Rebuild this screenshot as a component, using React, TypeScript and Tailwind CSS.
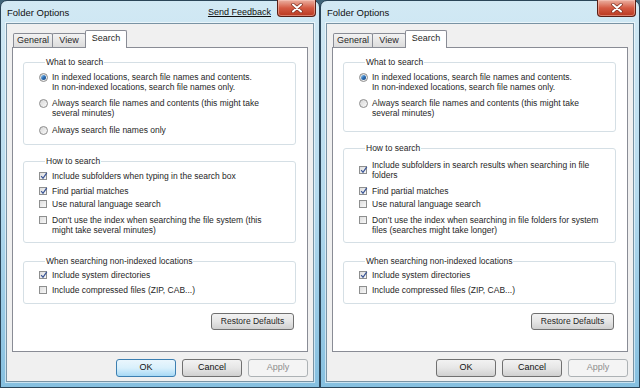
import React from 'react'

type Item = {
  kind: 'radio' | 'check'
  on?: boolean
  lines: string[]
  mt: string
  center?: boolean
}

type Group = {
  title: string
  mt: string
  pb: string
  items: Item[]
}

const leftGroups: Group[] = [
  {
    title: 'What to search',
    mt: 'mt-0',
    pb: 'pb-[9px]',
    items: [
      { kind: 'radio', on: true, mt: 'mt-[5px]', lines: ['In indexed locations, search file names and contents.', 'In non-indexed locations, search file names only.'] },
      { kind: 'radio', mt: 'mt-[6px]', lines: ['Always search file names and contents (this might take', 'several minutes)'] },
      { kind: 'radio', mt: 'mt-[7px]', lines: ['Always search file names only'] },
    ],
  },
  {
    title: 'How to search',
    mt: 'mt-[11px]',
    pb: 'pb-[7px]',
    items: [
      { kind: 'check', on: true, mt: 'mt-[5px]', lines: ['Include subfolders when typing in the search box'] },
      { kind: 'check', on: true, mt: 'mt-[5px]', lines: ['Find partial matches'] },
      { kind: 'check', mt: 'mt-[3px]', lines: ['Use natural language search'] },
      { kind: 'check', mt: 'mt-[6px]', lines: ["Don't use the index when searching the file system (this", 'might take several minutes)'] },
    ],
  },
  {
    title: 'When searching non-indexed locations',
    mt: 'mt-[13px]',
    pb: 'pb-[8px]',
    items: [
      { kind: 'check', on: true, mt: 'mt-[4px]', lines: ['Include system directories'] },
      { kind: 'check', mt: 'mt-[5px]', lines: ['Include compressed files (ZIP, CAB...)'] },
    ],
  },
]

const rightGroups: Group[] = [
  {
    title: 'What to search',
    mt: 'mt-0',
    pb: 'pb-[13px]',
    items: [
      { kind: 'radio', on: true, mt: 'mt-[5px]', lines: ['In indexed locations, search file names and contents.', 'In non-indexed locations, search file names only.'] },
      { kind: 'radio', mt: 'mt-[6px]', lines: ['Always search file names and contents (this might take', 'several minutes)'] },
    ],
  },
  {
    title: 'How to search',
    mt: 'mt-[11px]',
    pb: 'pb-[7px]',
    items: [
      { kind: 'check', on: true, center: true, mt: 'mt-[7px]', lines: ['Include subfolders in search results when searching in file', 'folders'] },
      { kind: 'check', on: true, mt: 'mt-[6px]', lines: ['Find partial matches'] },
      { kind: 'check', mt: 'mt-[3px]', lines: ['Use natural language search'] },
      { kind: 'check', mt: 'mt-[6px]', lines: ['Don\u2019t use the index when searching in file folders for system', 'files (searches might take longer)'] },
    ],
  },
  {
    title: 'When searching non-indexed locations',
    mt: 'mt-[13px]',
    pb: 'pb-[8px]',
    items: [
      { kind: 'check', on: true, mt: 'mt-[4px]', lines: ['Include system directories'] },
      { kind: 'check', mt: 'mt-[5px]', lines: ['Include compressed files (ZIP, CAB...)'] },
    ],
  },
]

function Radio({ on }: { on?: boolean }) {
  return (
    <span className="mt-[1px] flex h-[9px] w-[9px] shrink-0 items-center justify-center rounded-full border border-[#8c8c8c] bg-gradient-to-br from-[#d6d6d6] to-[#fbfbfb]">
      {on && <span className="h-[5px] w-[5px] rounded-full bg-gradient-to-br from-[#a6d6f5] via-[#2e72b8] to-[#17427a]" />}
    </span>
  )
}

function Check({ on, center }: { on?: boolean; center?: boolean }) {
  return (
    <span
      className={`${center ? '' : 'mt-[1px]'} relative flex h-[8px] w-[8px] shrink-0 items-center justify-center border border-[#8e8f8f] bg-gradient-to-br from-[#dedede] to-[#f8f8f8]`}
    >
      {on && (
        <svg width="8" height="8" viewBox="0 0 8 8" className="absolute left-[0px] top-[-1px]">
          <path d="M1.2 4.2 L3 6.3 L6.8 0.8" fill="none" stroke="#3b5696" strokeWidth="1.3" />
        </svg>
      )}
    </span>
  )
}

function Option({ item }: { item: Item }) {
  return (
    <div className={`flex ${item.center ? 'items-center' : 'items-start'} ${item.kind === 'radio' ? 'gap-[4px]' : 'gap-[5px]'} ${item.mt}`}>
      {item.kind === 'radio' ? <Radio on={item.on} /> : <Check on={item.on} center={item.center} />}
      <div className="whitespace-nowrap leading-[10px]">
        {item.lines.map((l) => (
          <div key={l}>{l}</div>
        ))}
      </div>
    </div>
  )
}

function GroupBox({ group }: { group: Group }) {
  return (
    <fieldset className={`rounded-[3px] border border-[#d5dfe5] pl-[15px] ${group.mt} ${group.pb}`}>
      <legend className="ml-[6px] px-[1px] leading-[10px]">{group.title}</legend>
      {group.items.map((it) => (
        <Option key={it.lines[0]} item={it} />
      ))}
    </fieldset>
  )
}

function Button({ label, variant }: { label: string; variant?: 'focus' | 'disabled' }) {
  const look =
    variant === 'focus'
      ? 'border-[#3c7fb1] bg-gradient-to-b from-[#eaf6fd] via-[#d9f0fc] to-[#a7d9f5] text-[#111]'
      : variant === 'disabled'
        ? 'border-[#adb2b5] bg-[#f4f4f4] text-[#8d8d8d]'
        : 'border-[#707070] bg-gradient-to-b from-[#f2f2f2] via-[#e6e6e6] to-[#d0d0d0] text-[#111]'
  return (
    <div className={`flex h-[18px] w-[60px] items-center justify-center rounded-[3px] border text-[9px] ${look}`}>{label}</div>
  )
}

function Tab({ label, selected, w }: { label: string; selected?: boolean; w: string }) {
  if (selected) {
    return (
      <div className={`relative z-10 -mb-px -ml-px flex h-[18px] ${w} items-center justify-center rounded-t-[2px] border border-b-0 border-[#898c95] bg-white pb-[2px] text-[9px]`}>
        {label}
      </div>
    )
  }
  return (
    <div className={`-ml-px flex h-[14px] ${w} items-center justify-center rounded-t-[2px] border border-b-0 border-[#898c95] bg-gradient-to-b from-[#f3f3f3] to-[#dcdcdc] pt-[1px] text-[9px] first:ml-0`}>
      {label}
    </div>
  )
}

function CloseIcon() {
  return (
    <svg width="12" height="10" viewBox="0 0 12 10">
      <path d="M2 1.5 L10 8.5 M10 1.5 L2 8.5" stroke="#7a2c1e" strokeWidth="3.4" strokeLinecap="round" />
      <path d="M2 1.5 L10 8.5 M10 1.5 L2 8.5" stroke="#ffffff" strokeWidth="2" strokeLinecap="round" />
    </svg>
  )
}

function FolderOptions({ groups, feedback, okFocus }: { groups: Group[]; feedback?: boolean; okFocus?: boolean }) {
  return (
    <div className="flex h-[388px] w-[320px] flex-col rounded-t-[7px] border border-[#2b4558] bg-gradient-to-b from-[#d2e9f4] via-[#b6dbee] to-[#86c0e0]">
      <div className="flex h-[22px] items-start pl-[6px] pr-[3px]">
        <div className="mt-[6px] text-[9.5px] leading-[11px] text-[#101010]">Folder Options</div>
        <div className="flex-1" />
        {feedback && <div className="mt-[6px] mr-[6px] text-[9px] leading-[11px] text-[#101010] underline">Send Feedback</div>}
        <div className="-mt-px flex h-[17px] w-[39px] items-center justify-center rounded-b-[4px] border border-t-0 border-[#5a1f15] bg-gradient-to-b from-[#eab0a2] via-[#d45a43] to-[#b8381f] shadow-[inset_0_0_0_1px_rgba(255,210,200,0.45)]">
          <CloseIcon />
        </div>
      </div>
      <div className="mx-[5px] flex h-[359px] flex-col border border-[#7993a4] bg-[#f0f0f0] px-[5px] pt-[6px] shadow-[0_0_0_1px_rgba(255,255,255,0.55)]">
        <div className="flex h-[17px] items-end pl-[1px]">
          <Tab label="General" w="w-[40px]" />
          <Tab label="View" w="w-[34px]" />
          <Tab label="Search" selected w="w-[42px]" />
        </div>
        <div className="flex h-[305px] flex-col border border-[#898c95] bg-white pl-[10px] pr-[11px] pt-[9px]">
          {groups.map((g) => (
            <GroupBox key={g.title} group={g} />
          ))}
          <div className="mt-[9px] flex justify-end pr-[2px]">
            <div className="flex h-[17px] w-[83px] items-center justify-center rounded-[3px] border border-[#707070] bg-gradient-to-b from-[#f2f2f2] via-[#e6e6e6] to-[#d0d0d0]">
              Restore Defaults
            </div>
          </div>
        </div>
        <div className="mt-[7px] flex justify-end gap-[6px]">
          <Button label="OK" variant={okFocus ? 'focus' : undefined} />
          <Button label="Cancel" />
          <Button label="Apply" variant="disabled" />
        </div>
      </div>
    </div>
  )
}

export default function App() {
  return (
    <div className="flex h-[388px] w-[640px] overflow-hidden bg-[#3f6479] font-['Liberation_Sans',Arial,sans-serif] text-[8.5px] text-[#262626]">
      <FolderOptions groups={leftGroups} feedback okFocus />
      <FolderOptions groups={rightGroups} />
    </div>
  )
}
